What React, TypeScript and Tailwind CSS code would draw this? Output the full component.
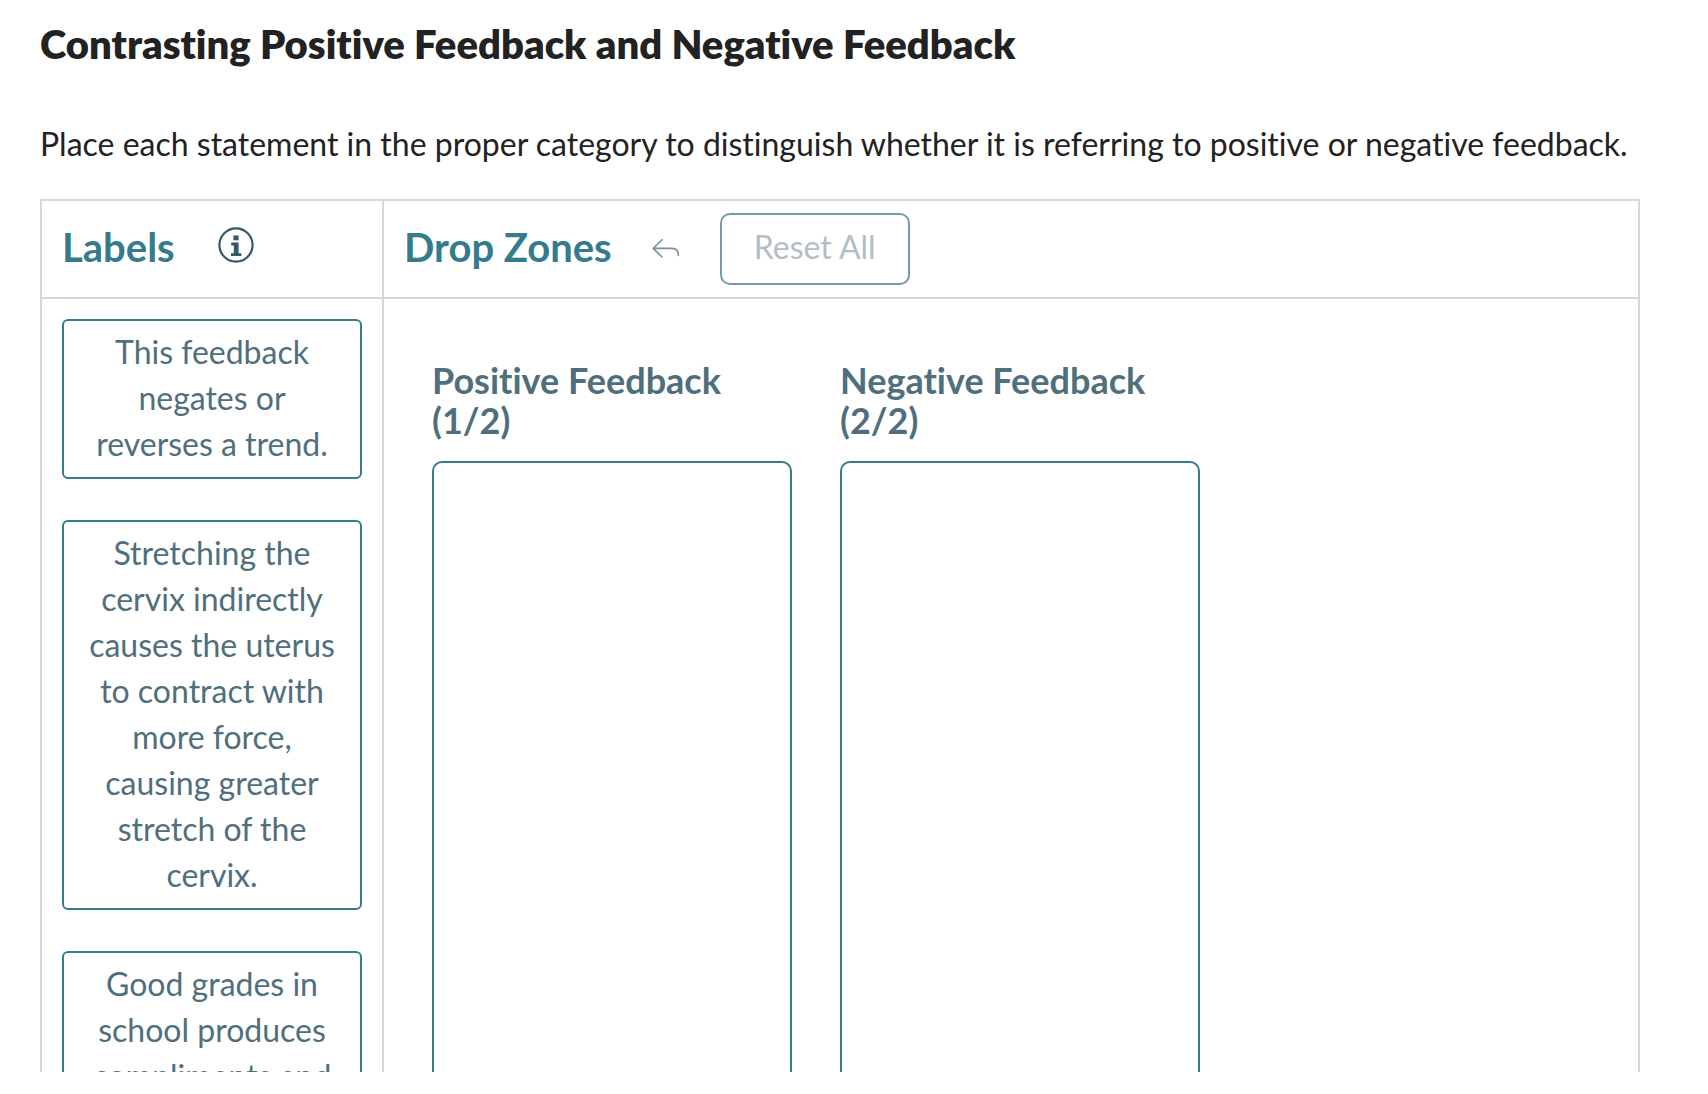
const labels = [
  "This feedback negates or reverses a trend.",
  "Stretching the cervix indirectly causes the uterus to contract with more force, causing greater stretch of the cervix.",
  "Good grades in school produces compliments and",
];

const zones = [
  { title: "Positive Feedback", placed: 1, total: 2 },
  { title: "Negative Feedback", placed: 2, total: 2 },
];

function InfoIcon() {
  return (
    <svg className="size-9" viewBox="0 0 36 36" fill="none" aria-hidden="true">
      <circle cx="18" cy="18" r="16.6" stroke="#33596a" strokeWidth="2.2" />
      <path
        d="M15.4 8.4h5.2v4.8h-5.2zM13.2 15.6h7.4v10.6h2.8v2.8H13v-2.8h2.8v-7.8h-2.6z"
        fill="#33596a"
      />
    </svg>
  );
}

function UndoIcon() {
  return (
    <svg
      className="h-5 w-7"
      viewBox="0 0 28 20"
      fill="none"
      stroke="#78929e"
      strokeWidth="1.6"
      strokeLinecap="round"
      aria-hidden="true"
    >
      <path d="M10 0.8L1.2 9.4l8.8 8.6M1.2 9.4H20c4.4 0 6.4 2.6 6.4 7" />
    </svg>
  );
}

export default function App() {
  return (
    <main className="flex h-screen flex-col overflow-hidden bg-white pb-[22px] pl-10 pr-[68px] font-[Lato,sans-serif] text-[32px] text-[#222222] [font-variant-ligatures:none]">
      <h1 className="mt-5 text-[40px] font-extrabold leading-[48px]">
        Contrasting Positive Feedback and Negative Feedback
      </h1>
      <p className="mt-[53px] whitespace-nowrap leading-[46px]">
        Place each statement in the proper category to distinguish whether it is referring to positive or negative
        feedback.
      </p>

      <div className="mt-8 flex min-h-0 flex-1 overflow-hidden border-2 border-b-0 border-[#d1d9dd]">
        <section className="w-[342px] shrink-0 border-r-2 border-[#d1d9dd]">
          <header className="flex h-[98px] items-center gap-[43px] border-b-2 border-[#d1d9dd] px-5">
            <h2 className="pb-1 text-[40px] font-bold leading-[48px] text-[#347b8e]">Labels</h2>
            <button type="button" aria-label="Label instructions" className="pb-2">
              <InfoIcon />
            </button>
          </header>
          <div className="flex flex-col gap-[41px] p-5">
            {labels.map((label) => (
              <button
                key={label}
                type="button"
                draggable
                className="rounded-md border-2 border-[#347b8e] px-5 pb-[10px] pt-2 text-center leading-[46px] text-[#4f6f7c]"
              >
                {label}
              </button>
            ))}
          </div>
        </section>

        <section className="min-w-0 flex-1">
          <header className="flex h-[98px] items-center border-b-2 border-[#d1d9dd] px-5">
            <h2 className="pb-1 text-[40px] font-bold leading-[48px] text-[#347b8e]">Drop Zones</h2>
            <button type="button" aria-label="Undo" disabled className="ml-10">
              <UndoIcon />
            </button>
            <button
              type="button"
              disabled
              className="ml-10 h-[72px] w-[190px] rounded-[10px] border-2 border-[#739ca8] pb-1 text-[#b0bfc6]"
            >
              Reset All
            </button>
          </header>
          <div className="flex gap-12 px-12 pt-[61px]">
            {zones.map((zone) => (
              <div key={zone.title} className="w-[360px]">
                <h3 className="text-[36px] font-bold leading-10 text-[#4f6f7c]">
                  {zone.title} ({zone.placed}/{zone.total})
                </h3>
                <div className="mt-[21px] h-[960px] rounded-[10px] border-2 border-[#347b8e]" />
              </div>
            ))}
          </div>
        </section>
      </div>
    </main>
  );
}
